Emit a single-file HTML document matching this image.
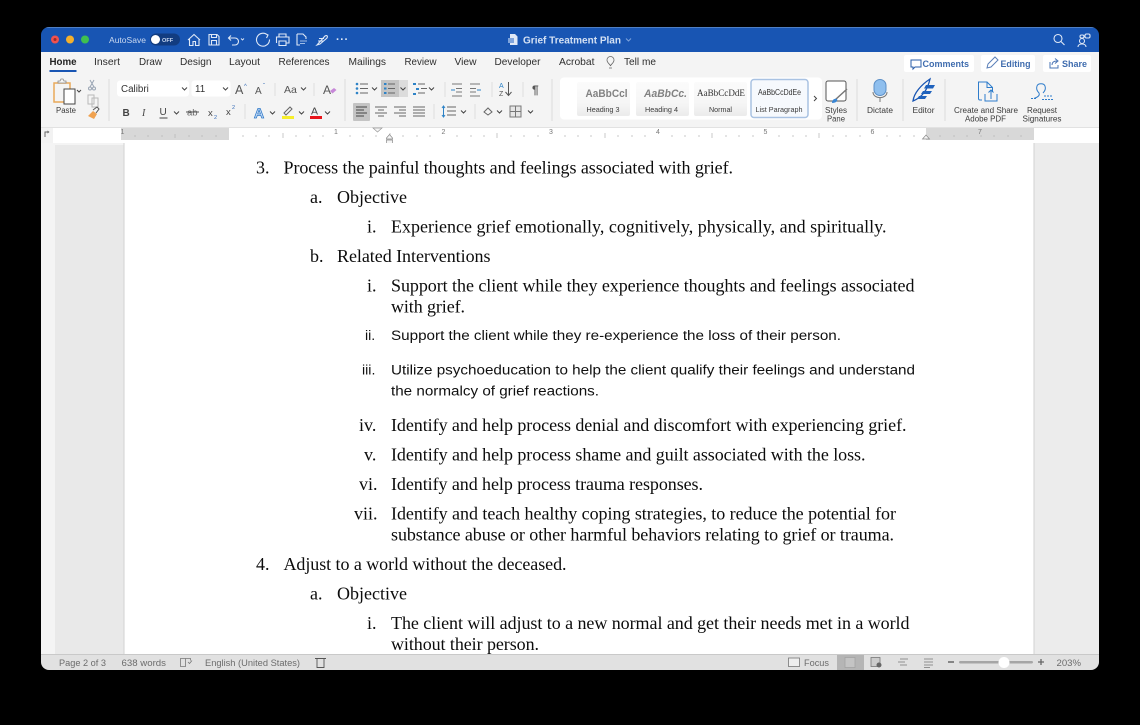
<!DOCTYPE html>
<html lang="en"><head><meta charset="utf-8"><title>Grief Treatment Plan</title>
<style>
html,body{margin:0;padding:0;background:#000;width:1140px;height:725px;overflow:hidden}
svg{display:block}
#all{filter:blur(.3px)}
text{font-family:"Liberation Sans",sans-serif}
.d text{font-family:"Liberation Serif",serif;font-size:18px;fill:#0c0c0c}
.c text{font-family:"Liberation Sans",sans-serif;font-size:14.2px;fill:#101010}
.tab{font-size:10.3px;fill:#2e2e2e}
.lab{font-size:8px;fill:#3c3c3c}
.st{font-size:9px;fill:#6c6c6c}
.w{fill:none;stroke:#dfe8f6;stroke-width:1.1}
.rt{font-size:7px;fill:#777}
.tk{stroke:#b4b4b4;stroke-width:.7}
</style></head><body>
<svg width="1140" height="725" viewBox="0 0 1140 725" xmlns="http://www.w3.org/2000/svg">
<defs><clipPath id="win"><rect x="41" y="27" width="1058" height="643" rx="8"/></clipPath>
<linearGradient id="tile" x1="0" y1="0" x2="0" y2="1"><stop offset="0" stop-color="#fbfbfb"/><stop offset=".6" stop-color="#f6f6f6"/><stop offset="1" stop-color="#ebebeb"/></linearGradient></defs>
<rect width="1140" height="725" fill="#000"/>
<g clip-path="url(#win)" id="all">
<rect x="41" y="27" width="1058" height="643" fill="#f4f4f4"/>
<!-- title bar -->
<rect x="41" y="27" width="1058" height="25" fill="#1855b3"/>
<rect x="41" y="27" width="1058" height="1" fill="#4f7fc4"/>
<circle cx="55" cy="39.500" r="4" fill="#f0524f"/><circle cx="55" cy="39.500" r="1.500" fill="#9c2a2a"/>
<circle cx="70" cy="39.500" r="4" fill="#f4b02c"/>
<circle cx="85" cy="39.500" r="4" fill="#3fc04f"/>
<text x="109" y="43" font-size="8.600" fill="#c9d8f0" textLength="37" lengthAdjust="spacingAndGlyphs">AutoSave</text>
<rect x="150" y="33.500" width="30" height="12" rx="6" fill="#123c80"/>
<circle cx="155.500" cy="39.500" r="4.500" fill="#fff"/>
<text x="162" y="42" font-size="5.600" font-weight="bold" fill="#c9d8f0">OFF</text>
<g class="w">
<path d="M188 40l6-5.500 6 5.500M189.500 39v6.500h3.500v-4h2.500v4h3.500V39"/>
<path d="M209 34.500h8l2 2v8.500h-10zM211.500 34.500v3h5v-3M211.500 45v-4.500h5V45"/>
<path d="M231 35.500l-2.500 2.500 2.500 2.500M229 38h6a3.500 3.500 0 0 1 0 7h-3"/>
<path d="M241 38.500l1.500 1.500 1.500-1.500" stroke-width=".9"/>
<path d="M267.500 35a6.500 6.500 0 1 0 2 4.500M265 33.500l3 1.500-1.500 3"/>
<path d="M279 37v-3h7v3M276.500 43v-6h12.500v6h-2.500M279 41h7v4.500h-7z"/>
<path d="M297 34h6l3 3v2M297 34v11h3"/>
<path d="M300 41h7M300 43.500h5" stroke="#9fbce6"/>
<path d="M317 45l8-9c2-1 3 0 2 2l-7 6zM318 41h5M319 38.500h5"/>
</g>
<text x="336" y="43" font-size="11" font-weight="bold" fill="#dfe8f6" letter-spacing=".6">···</text>
<path d="M510 34h5l2.500 2.500V45H510z" fill="#dfe8f6"/><rect x="508" y="38" width="6" height="5" fill="#7fa4dc"/>
<text x="523" y="43.500" font-size="9.800" font-weight="bold" fill="#d3e0f3" textLength="98" lengthAdjust="spacingAndGlyphs">Grief Treatment Plan</text>
<path d="M626 38.500l2.500 2.500 2.500-2.500" fill="none" stroke="#7fa4dc"/>
<circle cx="1058" cy="38.500" r="4" class="w"/><path d="M1061 41.500l3.500 3.500" class="w"/>
<g class="w"><circle cx="1082" cy="41" r="2.500"/><path d="M1078 47c0-4 8-4 8 0"/><rect x="1085" y="34" width="5" height="4" rx="1.500"/><rect x="1080" y="35" width="4" height="3" rx="1.500"/></g>

<!-- tabs -->
<g class="tab">
<text x="49.500" y="65" font-weight="bold" fill="#222" textLength="27" lengthAdjust="spacingAndGlyphs">Home</text>
<text x="94" y="65" textLength="26" lengthAdjust="spacingAndGlyphs">Insert</text>
<text x="139" y="65" textLength="23" lengthAdjust="spacingAndGlyphs">Draw</text>
<text x="180" y="65" textLength="31.500" lengthAdjust="spacingAndGlyphs">Design</text>
<text x="229" y="65" textLength="31" lengthAdjust="spacingAndGlyphs">Layout</text>
<text x="278.500" y="65" textLength="51" lengthAdjust="spacingAndGlyphs">References</text>
<text x="348.500" y="65" textLength="37.500" lengthAdjust="spacingAndGlyphs">Mailings</text>
<text x="404.500" y="65" textLength="32" lengthAdjust="spacingAndGlyphs">Review</text>
<text x="454.500" y="65" textLength="22" lengthAdjust="spacingAndGlyphs">View</text>
<text x="494.500" y="65" textLength="46" lengthAdjust="spacingAndGlyphs">Developer</text>
<text x="559" y="65" textLength="35.500" lengthAdjust="spacingAndGlyphs">Acrobat</text>
<text x="624" y="65" textLength="32" lengthAdjust="spacingAndGlyphs">Tell me</text>
</g>
<rect x="49.500" y="70" width="27" height="2" fill="#1855b3"/>
<path d="M610.500 66c-.5-2-3.500-3-3.500-6a3.500 3.500 0 0 1 7 0c0 3-3 4-3.500 6zM609 68h3" fill="none" stroke="#666" stroke-width=".8"/>

<rect x="904" y="55" width="70" height="17" rx="2" fill="#fff"/>
<path d="M911 60h10v7h-6l-2 2v-2h-2z" fill="none" stroke="#2a5da8"/>
<text x="922.500" y="67" font-size="9.300" font-weight="bold" fill="#3f6cae" textLength="46.500" lengthAdjust="spacingAndGlyphs">Comments</text>
<rect x="981" y="55" width="54" height="17" rx="2" fill="#fff"/>
<path d="M987 68l1-4 7-7 3 3-7 7z" fill="none" stroke="#5a7fb8"/>
<text x="1000.500" y="67" font-size="9.300" font-weight="bold" fill="#3f6cae" textLength="30" lengthAdjust="spacingAndGlyphs">Editing</text>
<rect x="1043" y="55" width="48" height="17" rx="2" fill="#fff"/>
<path d="M1050 62v6h8v-3M1052 65c0-3 2-4 5-4M1055 58.500l3 2.500-3 2.500" fill="none" stroke="#4a74b4"/>
<text x="1062" y="67" font-size="9.300" font-weight="bold" fill="#3f6cae" textLength="25" lengthAdjust="spacingAndGlyphs">Share</text>

<!-- Paste group -->
<rect x="54" y="83" width="16" height="19" fill="none" stroke="#e9a95a" stroke-width="1.500"/>
<path d="M58 83v-2h2l1-2 2 0 1 2h2v2z" fill="#f5f5f5" stroke="#888" stroke-width=".8"/>
<rect x="64" y="89" width="11" height="15" fill="#fff" stroke="#444" stroke-width="1"/>
<path d="M77 90l2 2 2-2" fill="none" stroke="#444"/>
<text x="56" y="113" class="lab" textLength="20" lengthAdjust="spacingAndGlyphs">Paste</text>
<path d="M90 80l4 7m0-7l-4 7" stroke="#9aa5b4" fill="none"/><circle cx="90" cy="88.500" r="1.500" fill="none" stroke="#9aa5b4"/><circle cx="94" cy="88.500" r="1.500" fill="none" stroke="#9aa5b4"/>
<path d="M88 95h6l0 9h-6zM92 98h6v9h-6z" fill="#f5f5f5" stroke="#b9b9b9"/>
<path d="M88 116l5-5 4 3-3 5z" fill="#f0a250"/><path d="M93 110l4-3 2 2-3 4" fill="none" stroke="#555"/>
<path d="M109 79v42" stroke="#dcdcdc"/>

<!-- font boxes -->
<rect x="117" y="80.500" width="72" height="16" rx="3" fill="#fff"/>
<text x="121" y="92" font-size="9.800" fill="#333">Calibri</text>
<path d="M182 87.500l2.500 2.500 2.500-2.500" fill="none" stroke="#444"/>
<rect x="191.500" y="80.500" width="39" height="16" rx="3" fill="#fff"/>
<text x="195" y="92" font-size="9.800" fill="#333">11</text>
<path d="M223 87.500l2.500 2.500 2.500-2.500" fill="none" stroke="#444"/>
<text x="235" y="94" font-size="12.500" fill="#555">A</text><text x="244" y="88" font-size="6" fill="#3a6fb8">^</text>
<text x="255" y="94" font-size="10" fill="#555">A</text><text x="263" y="88" font-size="6" fill="#3a6fb8">ˇ</text>
<path d="M275 83v13M314 83v13" stroke="#dedede"/>
<text x="284" y="93" font-size="10.500" fill="#555">Aa</text>
<path d="M301 87.500l2.500 2.500 2.500-2.500" fill="none" stroke="#444"/>
<text x="323" y="94" font-size="12" fill="#555">A</text><path d="M330 91l4-3 2.500 2-4 3.500z" fill="#c788d8"/>

<!-- format row -->
<text x="122.500" y="116" font-size="10" font-weight="bold" fill="#444">B</text>
<text x="142" y="116" font-size="10" style="font-family:'Liberation Serif',serif" font-style="italic" fill="#444">I</text>
<text x="159.500" y="115" font-size="10" fill="#444">U</text><path d="M159.500 118h8" stroke="#444"/>
<path d="M174 111.500l2.500 2.500 2.500-2.500" fill="none" stroke="#444"/>
<text x="187" y="115.500" font-size="9.500" fill="#666">ab</text><path d="M186 112h13" stroke="#555"/>
<text x="208" y="116" font-size="9.500" fill="#444">x</text><text x="214" y="119" font-size="5.500" fill="#3a6fb8">2</text>
<text x="226" y="115" font-size="9.500" fill="#444">x</text><text x="232" y="109" font-size="5.500" fill="#3a6fb8">2</text>
<path d="M245 104v15" stroke="#dedede"/>
<text x="254" y="118" font-size="14" font-weight="bold" fill="#cfe2f8" stroke="#2f79c9" stroke-width=".8">A</text>
<path d="M270 111.500l2.500 2.500 2.500-2.500M299 111.500l2.500 2.500 2.500-2.500M325 111.500l2.500 2.500 2.500-2.500" fill="none" stroke="#444"/>
<path d="M284 113l6-6 2 2-6 6z" fill="none" stroke="#666"/><rect x="282" y="116" width="12" height="3" fill="#f6ee2b"/>
<text x="311" y="114.500" font-size="10.500" fill="#444">A</text><rect x="310" y="116" width="12" height="3" fill="#e8141a"/>
<path d="M345 79v42" stroke="#dcdcdc"/>

<!-- lists -->
<rect x="381" y="80" width="18" height="17" fill="#c4c4c4"/><rect x="399" y="80" width="9" height="17" fill="#dcdcdc"/>
<g fill="#2e83c7"><circle cx="357" cy="84" r="1.300"/><circle cx="357" cy="88.500" r="1.300"/><circle cx="357" cy="93" r="1.300"/><rect x="384" y="83" width="2.500" height="2"/><rect x="384" y="87.500" width="2.500" height="2"/><rect x="384" y="92" width="2.500" height="2"/><rect x="413" y="83" width="3" height="2"/><rect x="416" y="88" width="3" height="2"/><rect x="413" y="93" width="3" height="2"/></g>
<path d="M360 84h8M360 88.500h8M360 93h8M388 84h7M388 88.500h7M388 93h7M418 84h7M421 88.500h6M418 93h7" stroke="#666"/>
<path d="M372 87.500l2.500 2.500 2.500-2.500M400.500 87.500l2.500 2.500 2.500-2.500M429 87.500l2.500 2.500 2.500-2.500" fill="none" stroke="#444"/>
<path d="M445 82v15M492 82v15M523 82v15" stroke="#dedede"/>
<path d="M452 84h10M456 88.500h6M456 92h6M452 96h10M470 84h10M470 88.500h6M470 92h6M470 96h10" stroke="#777"/>
<path d="M451 90h4M481 90h-4" stroke="#2e83c7"/>
<text x="499" y="88" font-size="7" fill="#2e83c7">A</text><text x="499" y="96" font-size="7" fill="#555">Z</text>
<path d="M508.500 82v13M505.500 92l3 3.500 3-3.500" fill="none" stroke="#555"/>
<text x="532" y="94" font-size="12" font-weight="bold" fill="#555">¶</text>

<rect x="353" y="103" width="17" height="18" rx="1" fill="#c4c4c4"/>
<path d="M356 107h11M356 110h8M356 113h11M356 116h8" stroke="#444"/>
<path d="M375 107h12M378 110h6M375 113h12M378 116h6M394 107h12M399 110h7M394 113h12M399 116h7M413 107h12M413 110h12M413 113h12M413 116h12" stroke="#666"/>
<path d="M434 104v15M475 104v15" stroke="#dedede"/>
<path d="M447 107h9M447 111h9M447 115h9" stroke="#666"/><path d="M443.500 106v11M442 108l1.500-2 1.500 2M442 115l1.500 2 1.500-2" fill="none" stroke="#2e83c7"/>
<path d="M461 110.500l2.500 2.500 2.500-2.500M497 110.500l2.500 2.500 2.500-2.500M528 110.500l2.500 2.500 2.500-2.500" fill="none" stroke="#444"/>
<path d="M484 112l4-4 4 4-4 3z" fill="none" stroke="#666"/>
<rect x="510" y="106" width="11" height="11" fill="#e6e6e6" stroke="#777"/><path d="M515.500 106v11M510 111.500h11" stroke="#777"/>
<path d="M552 79v42" stroke="#dcdcdc"/>

<!-- styles gallery -->
<rect x="560" y="77.500" width="262" height="42" rx="4" fill="#fff"/>
<rect x="577" y="82" width="53" height="34" rx="2" fill="url(#tile)"/>
<rect x="636" y="82" width="53" height="34" rx="2" fill="url(#tile)"/>
<rect x="694" y="82" width="53" height="34" rx="2" fill="url(#tile)"/>
<rect x="751" y="79.500" width="57" height="38" rx="3" fill="#f6f9fd" stroke="#a9c2e2" stroke-width="1.500"/>
<text x="585.500" y="97" font-size="10.800" font-weight="bold" fill="#828282" textLength="42" lengthAdjust="spacingAndGlyphs">AaBbCcl</text>
<text x="644" y="97" font-size="10.800" font-weight="bold" font-style="italic" fill="#828282" textLength="43" lengthAdjust="spacingAndGlyphs">AaBbCc.</text>
<text x="697" y="96" font-size="9" style="font-family:'Liberation Serif',serif" fill="#333" textLength="48" lengthAdjust="spacingAndGlyphs">AaBbCcDdE</text>
<text x="758" y="95" font-size="8" fill="#333" textLength="43" lengthAdjust="spacingAndGlyphs">AaBbCcDdEe</text>
<g class="lab" style="font-size:7.500px">
<text x="586.500" y="112" textLength="33" lengthAdjust="spacingAndGlyphs">Heading 3</text>
<text x="645" y="112" textLength="33" lengthAdjust="spacingAndGlyphs">Heading 4</text>
<text x="709" y="112" textLength="23" lengthAdjust="spacingAndGlyphs">Normal</text>
<text x="755.500" y="112" textLength="47" lengthAdjust="spacingAndGlyphs">List Paragraph</text>
</g>
<path d="M814 96l2.500 2.500-2.500 2.500" fill="none" stroke="#444"/>
<rect x="826" y="81" width="20" height="20" rx="2" fill="#fff" stroke="#555"/>
<path d="M835 100l12-11" stroke="#777" stroke-width="1.500"/><path d="M832 103c0-3 2-5 5-4 1 2-1 4-5 4z" fill="#3a86d4"/>
<text x="825" y="113" class="lab" textLength="22" lengthAdjust="spacingAndGlyphs">Styles</text>
<text x="827" y="121.500" class="lab" textLength="18" lengthAdjust="spacingAndGlyphs">Pane</text>
<path d="M857 79v42M903 79v42M945 79v42" stroke="#dcdcdc"/>
<rect x="874" y="79.500" width="12" height="16" rx="6" fill="#8fbfee" stroke="#5b8fc7"/>
<path d="M873 92c0 7.500 14 7.500 14 0M880 98v4" fill="none" stroke="#777"/>
<text x="867" y="113" class="lab" textLength="26" lengthAdjust="spacingAndGlyphs">Dictate</text>
<path d="M913 101c1-8 8-16 17-22-2 9-7 18-17 22z" fill="none" stroke="#1855b3" stroke-width="1.300"/>
<path d="M926 85h9l-2 3.500h-9zM923 91h9l-2 3h-9zM919 96h8l-2 3h-8z" fill="#1f62bd"/>
<text x="912.500" y="113" class="lab" textLength="22" lengthAdjust="spacingAndGlyphs">Editor</text>
<path d="M982 100h-2q-1.500 0-1.500-1.500V82h8.500l5.500 5.500V92M987 82v5.500h5.500" fill="none" stroke="#2e7ccb"/>
<path d="M985 94v7h12v-7M991 99v-9M988.500 92.500l2.500-2.500 2.500 2.500" fill="none" stroke="#2e7ccb"/>
<text x="954" y="113" class="lab" textLength="64" lengthAdjust="spacingAndGlyphs">Create and Share</text>
<text x="965" y="121.500" class="lab" textLength="41" lengthAdjust="spacingAndGlyphs">Adobe PDF</text>
<path d="M1034 98.500c4-1.500 6-3 5-5.500-2-2-3-4-2-7 1-3 7-3 8 0 1 3 0 5-2 7" fill="none" stroke="#2e7ccb"/>
<path d="M1031 98.500h6M1044 96l8 0M1042 99.500h12" stroke="#2e7ccb" stroke-dasharray="2 1"/>
<text x="1027" y="113" class="lab" textLength="30" lengthAdjust="spacingAndGlyphs">Request</text>
<text x="1022.500" y="121.500" class="lab" textLength="39" lengthAdjust="spacingAndGlyphs">Signatures</text>

<!-- ruler -->
<rect x="41" y="127" width="1058" height="16" fill="#fff"/>
<rect x="41" y="127" width="1058" height="1" fill="#e2e2e2"/>
<rect x="41" y="128" width="12" height="15" fill="#f2f2f2"/>
<path d="M45 137v-5h3" fill="none" stroke="#666"/><path d="M47.500 130.500l2 1.500-2 1.500z" fill="#666"/>
<rect x="121" y="128" width="108" height="12" fill="#d8d8d8"/>
<rect x="926" y="128" width="108" height="12" fill="#d8d8d8"/>
<path class="tk" d="M135 135v2M148 135v2M162 135v2M175 134v4M189 135v2M202 135v2M216 135v2M243 135v2M256 135v2M269 135v2M283 133v5M296 135v2M310 135v2M323 135v2M350 135v2M363 135v2M376 135v2M390 133v5M403 135v2M417 135v2M430 135v2M457 135v2M471 135v2M484 135v2M497 133v5M511 135v2M524 135v2M538 135v2M565 135v2M578 135v2M591 135v2M605 133v5M618 135v2M632 135v2M645 135v2M672 135v2M685 135v2M699 135v2M712 133v5M726 135v2M739 135v2M753 135v2M779 135v2M793 135v2M806 135v2M819 133v5M833 135v2M846 135v2M860 135v2M887 135v2M900 135v2M914 135v2M940 135v2M954 135v2M967 135v2M981 135v2M994 135v2M1008 135v2M1021 135v2"/>
<g class="rt"><text x="120.500" y="134">1</text><text x="334" y="134">1</text><text x="441.500" y="134">2</text><text x="549" y="134">3</text><text x="656" y="134">4</text><text x="763.500" y="134">5</text><text x="870.500" y="134">6</text><text x="978" y="134">7</text></g>
<path d="M373 128h9l-4.500 4z" fill="#f5f5f5" stroke="#999" stroke-width=".7"/>
<path d="M386.500 138l3-3.500 3 3.500v1h-6zM386.500 140h6v3.500h-6z" fill="#f5f5f5" stroke="#888" stroke-width=".7"/>
<path d="M922.500 139l3.500-4 3.500 4z" fill="#f5f5f5" stroke="#888" stroke-width=".7"/>

<!-- document area -->
<rect x="41" y="143" width="1058" height="512" fill="#f4f4f4"/>
<rect x="55" y="145" width="68.500" height="510" fill="#e9e9e9"/>
<rect x="1034" y="143" width="65" height="512" fill="#ececec"/>
<rect x="124" y="143" width="909.500" height="512" fill="#fff"/>
<rect x="123.500" y="143" width="1" height="512" fill="#d2d2d2"/>
<rect x="1033.500" y="143" width="1" height="512" fill="#d2d2d2"/>

<g class="d">
<text x="256" y="173.500">3.</text><text x="283.500" y="173.500" textLength="449.500" lengthAdjust="spacing">Process the painful thoughts and feelings associated with grief.</text>
<text x="310" y="203">a.</text><text x="337" y="203" textLength="70" lengthAdjust="spacing">Objective</text>
<text x="367" y="232.500">i.</text><text x="391" y="232.500" textLength="495.500" lengthAdjust="spacing">Experience grief emotionally, cognitively, physically, and spiritually.</text>
<text x="310" y="262">b.</text><text x="337" y="262" textLength="153.500" lengthAdjust="spacing">Related Interventions</text>
<text x="367" y="291.500">i.</text><text x="391" y="291.500" textLength="523.500" lengthAdjust="spacing">Support the client while they experience thoughts and feelings associated</text>
<text x="391" y="312.500" textLength="74" lengthAdjust="spacing">with grief.</text>
<text x="359" y="431">iv.</text><text x="391" y="431" textLength="515.500" lengthAdjust="spacing">Identify and help process denial and discomfort with experiencing grief.</text>
<text x="364" y="460.500">v.</text><text x="391" y="460.500" textLength="474.500" lengthAdjust="spacing">Identify and help process shame and guilt associated with the loss.</text>
<text x="359" y="490">vi.</text><text x="391" y="490" textLength="312" lengthAdjust="spacing">Identify and help process trauma responses.</text>
<text x="354" y="519.500">vii.</text><text x="391" y="519.500" textLength="505" lengthAdjust="spacing">Identify and teach healthy coping strategies, to reduce the potential for</text>
<text x="391" y="540.500" textLength="503" lengthAdjust="spacing">substance abuse or other harmful behaviors relating to grief or trauma.</text>
<text x="256" y="570">4.</text><text x="283.500" y="570" textLength="283" lengthAdjust="spacing">Adjust to a world without the deceased.</text>
<text x="310" y="599.500">a.</text><text x="337" y="599.500" textLength="70" lengthAdjust="spacing">Objective</text>
<text x="367" y="629">i.</text><text x="391" y="629" textLength="518.500" lengthAdjust="spacing">The client will adjust to a new normal and get their needs met in a world</text>
<text x="391" y="650" textLength="148" lengthAdjust="spacing">without their person.</text>
</g>
<g class="c">
<text x="365" y="340">ii.</text><text x="391" y="340" textLength="450" lengthAdjust="spacingAndGlyphs">Support the client while they re-experience the loss of their person.</text>
<text x="362" y="374.500">iii.</text><text x="391" y="374.500" textLength="524" lengthAdjust="spacingAndGlyphs">Utilize psychoeducation to help the client qualify their feelings and understand</text>
<text x="391" y="395.500" textLength="208" lengthAdjust="spacingAndGlyphs">the normalcy of grief reactions.</text>
</g>

<!-- status bar -->
<rect x="41" y="654" width="1058" height="16" fill="#e1e1e1"/>
<rect x="41" y="654" width="1058" height="1" fill="#c9c9c9"/>
<g class="st">
<text x="59" y="666" textLength="47" lengthAdjust="spacingAndGlyphs">Page 2 of 3</text>
<text x="121.500" y="666" textLength="44.500" lengthAdjust="spacingAndGlyphs">638 words</text>
<text x="205" y="666" textLength="95" lengthAdjust="spacingAndGlyphs">English (United States)</text>
<text x="804" y="666" textLength="25" lengthAdjust="spacingAndGlyphs">Focus</text>
<text x="1056.500" y="666" textLength="24.500" lengthAdjust="spacingAndGlyphs">203%</text>
</g>
<path d="M180.500 658.500h5v8h-5zM185.500 658.500h5v2M188 662l1.500 1.500 2.500-3" fill="none" stroke="#777" stroke-width=".8"/>
<path d="M317 658.500h7v9h-7zM315 658.500h3M323 658.500h3" fill="none" stroke="#555" stroke-width=".9"/>
<rect x="788.500" y="658" width="11" height="8.500" fill="#eee" stroke="#777" stroke-width=".8"/>
<rect x="837" y="655" width="27" height="15" fill="#b5b5b5"/>
<rect x="845" y="657.500" width="10" height="10" fill="#c4c4c4" stroke="#a0a0a0" stroke-width=".7"/>
<rect x="871" y="657.500" width="9" height="9" fill="#ccc" stroke="#777" stroke-width=".8"/><circle cx="879" cy="665" r="2.500" fill="#666"/>
<path d="M900 659h8M898 662h7M900 665h7M924 659h9M924 662h9M924 665h9M924 667.500h6" stroke="#777" stroke-width=".8"/>
<path d="M948 662h6" stroke="#666" stroke-width="1.500"/>
<rect x="959" y="661" width="74" height="2.500" rx="1.200" fill="#a5a5a5"/>
<circle cx="1004" cy="662.500" r="5.500" fill="#fff"/>
<path d="M1038 662h6M1041 659v6" stroke="#666" stroke-width="1.300"/>
</g>
</svg>
</body></html>
